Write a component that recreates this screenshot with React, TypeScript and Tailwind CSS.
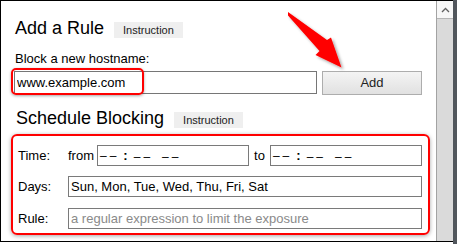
import type { ReactNode } from 'react';

const FONT = { fontFamily: '"Liberation Sans", Arial, sans-serif' };

function Badge() {
  return (
    <span className="h-[16px] px-[9px] flex items-center bg-[#efefef] text-[11px] leading-none text-[#222]">
      Instruction
    </span>
  );
}

function Heading({ children }: { children: ReactNode }) {
  return (
    <div className="flex items-end gap-[10px]">
      <h2 className="text-[18px] leading-[20px] text-black">{children}</h2>
      <Badge />
    </div>
  );
}

function DashPair() {
  return <span className="text-[12px] tracking-[3px]">––</span>;
}

function TimeField() {
  return (
    <div className="flex-1 h-[21px] border border-[#7a7a7a] bg-white flex items-center pl-[2px] text-black">
      <DashPair />
      <span className="ml-[4px] text-[13px] font-bold">:</span>
      <span className="ml-[6px]">
        <DashPair />
      </span>
      <span className="ml-[9px]">
        <DashPair />
      </span>
    </div>
  );
}

function FieldRow({ label, children }: { label: string; children: ReactNode }) {
  return (
    <div className="flex items-center h-[21px]">
      <span className="w-[50px] text-[13px] text-black">{label}</span>
      {children}
    </div>
  );
}

function Arrow() {
  return (
    <svg className="absolute left-[280px] top-[4px]" width="72" height="72" viewBox="280 4 72 72">
      <defs>
        <filter id="arrow-shadow" x="-30%" y="-30%" width="160%" height="160%">
          <feDropShadow dx="2" dy="2" stdDeviation="1.6" floodColor="#000" floodOpacity="0.35" />
        </filter>
      </defs>
      <polygon
        points="288,12 327,40 331,37.5 341.5,67.5 315.5,55 319.5,51 288,15.5"
        fill="#ff0000"
        filter="url(#arrow-shadow)"
      />
    </svg>
  );
}

function Scrollbar() {
  return (
    <div className="w-[17px] flex flex-col border-l border-[#a3a3a3] bg-[#dadada]">
      <div className="h-[18px] bg-[#f7f7f7] border-b border-[#b5b5b5] flex items-center justify-center">
        <svg width="9" height="6" viewBox="0 0 9 6">
          <polyline points="1,5 4.5,1.5 8,5" fill="none" stroke="#606060" strokeWidth="1.3" />
        </svg>
      </div>
      <div className="flex-1" />
    </div>
  );
}

export default function App() {
  return (
    <div className="relative w-[457px] h-[244px] bg-white flex overflow-hidden" style={FONT}>
      <div className="flex flex-1 h-[242px] border-l border-t border-b border-black">
        <div className="flex-1 pl-[10px] pr-[6px] pt-[17px] flex flex-col">
          <div className="pl-[4px] pr-[8px]">
            <Heading>Add a Rule</Heading>
            <p className="mt-[13px] text-[13px] leading-[15px] text-black">Block a new hostname:</p>
            <div className="relative mt-[5px] flex items-start gap-[5px] -ml-px">
              <input
                readOnly
                value="www.example.com"
                className="flex-1 h-[23px] border border-[#767676] px-[2px] text-[13px] text-black outline-none"
              />
              <button className="w-[100px] h-[24px] border border-[#adadad] bg-gradient-to-b from-[#f4f4f4] to-[#e1e1e1] text-[13px] text-[#222]">
                Add
              </button>
              <div className="absolute left-[-3px] top-[-3px] w-[133px] h-[27px] rounded-[5px] border-2 border-[#ff0000] shadow-[0_1px_3px_rgba(0,0,0,0.35)] pointer-events-none" />
            </div>
            <div className="mt-[13px] ml-px">
              <Heading>Schedule Blocking</Heading>
            </div>
          </div>
          <div className="mt-[6px] rounded-[6px] border-2 border-[#ff0000] shadow-[0_1px_4px_rgba(0,0,0,0.35)] pl-[5px] pr-[6px] pt-[9px] pb-[4px] flex flex-col">
            <FieldRow label="Time:">
              <span className="text-[13px] text-black">from</span>
              <div className="ml-[3px] flex-1 flex items-center">
                <TimeField />
                <span className="mx-[5px] text-[13px] text-black">to</span>
                <TimeField />
              </div>
            </FieldRow>
            <div className="mt-[10px]">
              <FieldRow label="Days:">
                <input
                  readOnly
                  value="Sun, Mon, Tue, Wed, Thu, Fri, Sat"
                  className="flex-1 h-[21px] border border-[#7a7a7a] px-[2px] text-[13px] text-black outline-none"
                />
              </FieldRow>
            </div>
            <div className="mt-[11px]">
              <FieldRow label="Rule:">
                <input
                  readOnly
                  placeholder="a regular expression to limit the exposure"
                  className="flex-1 h-[21px] border border-[#7a7a7a] px-[2px] text-[13px] text-black placeholder:text-[#8a8a8a] outline-none"
                />
              </FieldRow>
            </div>
          </div>
        </div>
        <Scrollbar />
      </div>
      <div className="w-[4px] h-full bg-[#51565c]" />
      <Arrow />
    </div>
  );
}
